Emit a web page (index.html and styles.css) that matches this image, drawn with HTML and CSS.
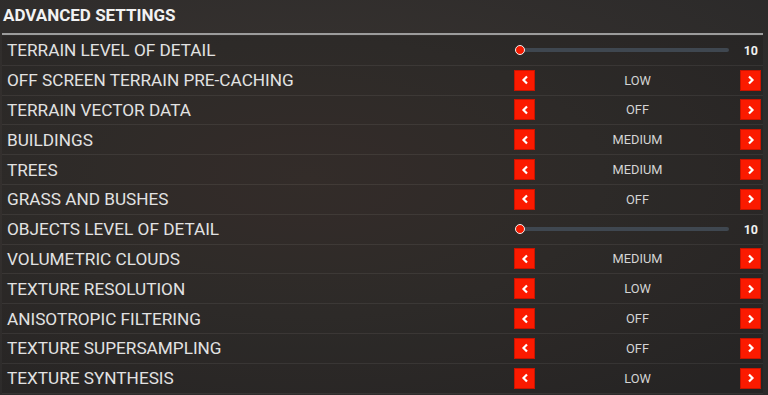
FILE: index.html
```html
<!DOCTYPE html>
<html lang="en">
<head>
    <meta charset="UTF-8">
    <title>Advanced Settings</title>
    <link rel="stylesheet" href="styles.css">
</head>
<body>
    <div id="panel">
        <h1 class="title">ADVANCED SETTINGS</h1>
        <div id="settings"></div>
    </div>

    <script>
        const settings = [
            ['TERRAIN LEVEL OF DETAIL', 'slider', '10'],
            ['OFF SCREEN TERRAIN PRE-CACHING', 'pick', 'LOW'],
            ['TERRAIN VECTOR DATA', 'pick', 'OFF'],
            ['BUILDINGS', 'pick', 'MEDIUM'],
            ['TREES', 'pick', 'MEDIUM'],
            ['GRASS AND BUSHES', 'pick', 'OFF'],
            ['OBJECTS LEVEL OF DETAIL', 'slider', '10'],
            ['VOLUMETRIC CLOUDS', 'pick', 'MEDIUM'],
            ['TEXTURE RESOLUTION', 'pick', 'LOW'],
            ['ANISOTROPIC FILTERING', 'pick', 'OFF'],
            ['TEXTURE SUPERSAMPLING', 'pick', 'OFF'],
            ['TEXTURE SYNTHESIS', 'pick', 'LOW']
        ];

        const leftArrow = '<svg width="8" height="10" viewBox="0 0 8 10"><path d="M6 1.5 L2.5 5 L6 8.5" fill="none" stroke="white" stroke-width="2.2"/></svg>';
        const rightArrow = '<svg width="8" height="10" viewBox="0 0 8 10"><path d="M2 1.5 L5.5 5 L2 8.5" fill="none" stroke="white" stroke-width="2.2"/></svg>';

        const list = document.getElementById('settings');

        settings.forEach(([name, type, value]) => {
            const row = document.createElement('div');
            row.classList.add('row');

            let control;
            if (type === 'slider') {
                control = `<div class="slider"><span class="knob"></span><span class="track"></span><span class="num">${value}</span></div>`;
            } else {
                control = `<div class="picker"><button class="arrow">${leftArrow}</button><span class="value">${value}</span><button class="arrow">${rightArrow}</button></div>`;
            }

            row.innerHTML = `<span class="label">${name}</span>${control}`;
            list.appendChild(row);
        });
    </script>
</body>
</html>
```

FILE: styles.css
```css
body {
    margin: 0;
    height: 395px;
    overflow: hidden;
    font-family: Roboto, "Liberation Sans", sans-serif;
    color: #dedede;
    background: radial-gradient(ellipse at 40% 45%, #3b332f 0%, #34302e 45%, #2a2929 100%),
                #2c2b2b;
}
#panel {
    padding: 0 5px 0 2px;
}
.title {
    margin: 0;
    height: 33px;
    padding-left: 1px;
    font-size: 17px;
    font-weight: bold;
    line-height: 31px;
    color: #f2f2f2;
    border-bottom: 2px solid #9c9c9c;
}
#settings {
    display: flex;
    flex-direction: column;
    gap: 1px;
    padding-top: 1px;
}
.row {
    height: 28.8px;
    display: flex;
    align-items: center;
    justify-content: space-between;
    padding-left: 5px;
    background-color: rgba(0, 0, 0, 0.12);
    box-shadow: 0 1px 0 rgba(255, 255, 255, 0.04);
}
.label {
    font-size: 17.2px;
    color: #e2e2e2;
}
.picker, .slider {
    width: 247px;
    margin-right: 2px;
    display: flex;
    align-items: center;
}
.arrow {
    width: 21px;
    height: 21px;
    padding: 0;
    border: 1px solid #c81400;
    background-color: #fb1a00;
    display: flex;
    align-items: center;
    justify-content: center;
    cursor: pointer;
}
.value {
    flex: 1;
    text-align: center;
    font-size: 12.8px;
    color: #d4d4d4;
}
.slider {
    height: 21px;
}
.knob {
    width: 8px;
    height: 8px;
    margin-left: 1px;
    border: 1.5px solid #f0f0f0;
    border-radius: 50%;
    background-color: #f51a00;
    position: relative;
    z-index: 1;
}
.track {
    flex: 1;
    height: 4px;
    margin-left: -2px;
    background-color: #3f4750;
    border-radius: 2px;
}
.num {
    width: 29px;
    text-align: right;
    padding-right: 3px;
    font-size: 12.5px;
    font-weight: bold;
    color: #f0f0f0;
}
```
